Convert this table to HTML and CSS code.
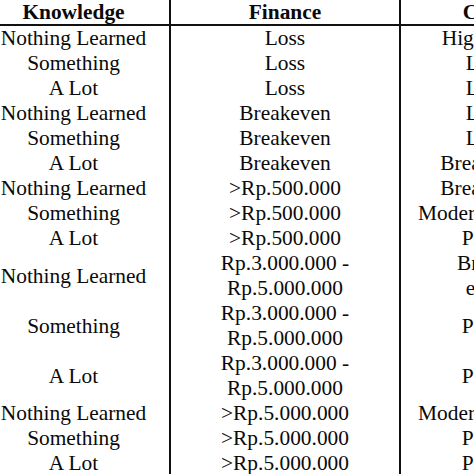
FILE: index.html
```html
<!DOCTYPE html>
<html>
<head>
<meta charset="utf-8">
<link rel="stylesheet" href="styles.css">
</head>
<body>
<div class="table">
  <div class="cell head c1">Knowledge</div>
  <div class="cell head c2">Finance</div>
  <div class="cell head c3">Cash</div>

  <div class="cell c1">Nothing Learned</div><div class="cell c2">Loss</div><div class="cell c3">High Loss</div>
  <div class="cell c1">Something</div><div class="cell c2">Loss</div><div class="cell c3">Loss</div>
  <div class="cell c1">A Lot</div><div class="cell c2">Loss</div><div class="cell c3">Loss</div>
  <div class="cell c1">Nothing Learned</div><div class="cell c2">Breakeven</div><div class="cell c3">Loss</div>
  <div class="cell c1">Something</div><div class="cell c2">Breakeven</div><div class="cell c3">Loss</div>
  <div class="cell c1">A Lot</div><div class="cell c2">Breakeven</div><div class="cell c3">Breakeven</div>
  <div class="cell c1">Nothing Learned</div><div class="cell c2">&gt;Rp.500.000</div><div class="cell c3">Breakeven</div>
  <div class="cell c1">Something</div><div class="cell c2">&gt;Rp.500.000</div><div class="cell c3">Moderate Profit</div>
  <div class="cell c1">A Lot</div><div class="cell c2">&gt;Rp.500.000</div><div class="cell c3">Profit</div>
  <div class="cell c1">Nothing Learned</div><div class="cell c2">Rp.3.000.000 -<br>Rp.5.000.000</div><div class="cell c3">Break-<br>even</div>
  <div class="cell c1">Something</div><div class="cell c2">Rp.3.000.000 -<br>Rp.5.000.000</div><div class="cell c3">Profit</div>
  <div class="cell c1">A Lot</div><div class="cell c2">Rp.3.000.000 -<br>Rp.5.000.000</div><div class="cell c3">Profit</div>
  <div class="cell c1">Nothing Learned</div><div class="cell c2">&gt;Rp.5.000.000</div><div class="cell c3">Moderate Profit</div>
  <div class="cell c1">Something</div><div class="cell c2">&gt;Rp.5.000.000</div><div class="cell c3">Profit</div>
  <div class="cell c1">A Lot</div><div class="cell c2">&gt;Rp.5.000.000</div><div class="cell c3">Profit</div>
</div>
</body>
</html>
```

FILE: styles.css
```css
html, body {
  margin: 0;
  padding: 0;
  overflow: hidden;
  background: #ffffff;
}

.table {
  display: grid;
  grid-template-columns: 193px 230px 170px;
  width: 593px;
  margin-left: -22px;
  font-family: "Liberation Serif", "Times New Roman", serif;
  font-size: 21.4px;
  line-height: 25px;
  color: #0a0a0a;
}

.cell {
  box-sizing: border-box;
  display: flex;
  align-items: center;
  justify-content: center;
  text-align: center;
  white-space: nowrap;
}

.c1, .c2 {
  border-right: 2px solid #111111;
}

.head {
  font-weight: bold;
  height: 26px;
  border-bottom: 2px solid #111111;
  align-items: flex-start;
}
```
